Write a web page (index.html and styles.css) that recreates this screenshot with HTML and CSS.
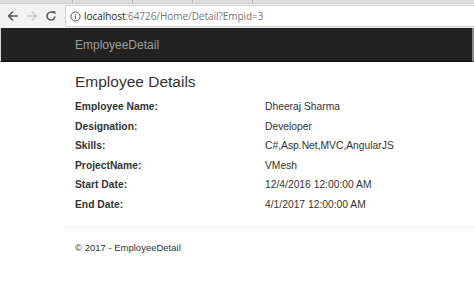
FILE: index.html
```html
<!DOCTYPE html>
<html>
<head>
<meta charset="utf-8">
<link rel="stylesheet" href="styles.css">
</head>
<body>
<div class="chrome">
  <div class="tabs">
    <span class="tab"></span><span class="tab"></span><span class="tab"></span><span class="tab"></span>
  </div>
  <div class="toolbar">
    <svg class="nav-ico" width="12" height="12" viewBox="0 0 12 12"><path d="M11 6H2M6 1.5L1.5 6 6 10.5" fill="none" stroke="#555" stroke-width="1.4"/></svg>
    <svg class="nav-ico" width="12" height="12" viewBox="0 0 12 12"><path d="M1 6h9M6 1.5L10.5 6 6 10.5" fill="none" stroke="#c8c8c8" stroke-width="1.4"/></svg>
    <svg class="nav-ico" width="12" height="12" viewBox="0 0 12 12"><path d="M10 6.5A4 4 0 1 1 8.6 3" fill="none" stroke="#555" stroke-width="1.5"/><path d="M7 1.2h3.4v3.4z" fill="#555"/></svg>
    <div class="address">
      <svg class="info" width="11" height="11" viewBox="0 0 11 11"><circle cx="5.5" cy="5.5" r="4.6" fill="none" stroke="#555" stroke-width="1"/><rect x="5" y="4.6" width="1" height="3.4" fill="#555"/><rect x="5" y="2.8" width="1" height="1" fill="#555"/></svg>
      <span class="host">localhost</span><span class="path">:64726/Home/Detail?Empid=3</span>
    </div>
  </div>
</div>
<div class="navbar">
  <span class="brand">EmployeeDetail</span>
</div>
<div class="container">
  <h2 class="title">Employee Details</h2>
  <dl class="details">
    <dt>Employee Name:</dt><dd>Dheeraj Sharma</dd>
    <dt>Designation:</dt><dd>Developer</dd>
    <dt>Skills:</dt><dd>C#,Asp.Net,MVC,AngularJS</dd>
    <dt>ProjectName:</dt><dd>VMesh</dd>
    <dt>Start Date:</dt><dd>12/4/2016 12:00:00 AM</dd>
    <dt>End Date:</dt><dd>4/1/2017 12:00:00 AM</dd>
  </dl>
  <hr class="rule">
  <footer class="footer">© 2017 - EmployeeDetail</footer>
</div>
</body>
</html>
```

FILE: styles.css
```css
html, body {
  margin: 0;
  padding: 0;
  background: #fff;
  font-family: "Liberation Sans", Arial, sans-serif;
  color: #333;
}
.chrome {
  background: #f2f2f2;
  height: 28px;
  display: flex;
  flex-direction: column;
}
.tabs {
  height: 3px;
  background: #dedede;
  border-bottom: 1px solid #cfcfcf;
  display: flex;
}
.tab {
  width: 59px;
  border-right: 1px solid #b5b5b5;
}
.tab:first-child {
  width: 72px;
}
.toolbar {
  flex: 1;
  display: flex;
  align-items: center;
  padding-left: 7px;
  gap: 7px;
}
.nav-ico {
  flex: none;
}
.address {
  margin-left: 1px;
  flex: 1;
  height: 20px;
  background: #fff;
  border: 1px solid #cfcfcf;
  border-right: none;
  border-radius: 2px 0 0 2px;
  display: flex;
  align-items: center;
  padding-left: 4px;
  font-family: "Open Sans", "Liberation Sans", sans-serif;
  font-size: 10px;
  letter-spacing: -0.05px;
}
.info {
  margin-right: 3px;
}
.host {
  color: #222;
}
.path {
  color: #777;
}
.navbar {
  height: 33px;
  background: #222;
  border-bottom: 1px solid #0a0a0a;
  border-left: 1px solid #d8d8d8;
  border-right: 2px solid #8a8a8a;
  display: flex;
  align-items: center;
  padding-left: 74px;
}
.brand {
  color: #9d9d9d;
  font-size: 12px;
}
.container {
  padding-left: 75px;
}
.title {
  font-weight: normal;
  font-size: 15.5px;
  margin: 10px 0 5px;
  line-height: 20px;
  color: #333;
}
.details {
  display: grid;
  grid-template-columns: 190px 1fr;
  margin: 0;
  font-size: 10.3px;
  line-height: 19.5px;
}
.details dt {
  font-weight: bold;
  margin: 0;
}
.details dd {
  margin: 0;
}
.rule {
  margin: 13px 0 0 -12px;
  border: 0;
  border-top: 1px solid #eee;
}
.footer {
  font-size: 9.5px;
  margin-top: 14px;
}
```
